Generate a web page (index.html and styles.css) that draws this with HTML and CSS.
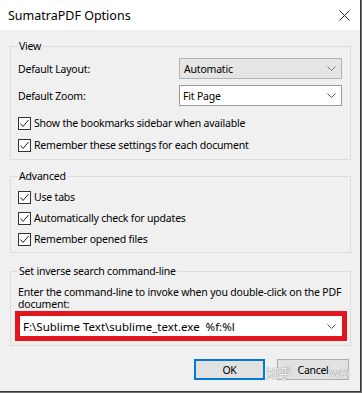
FILE: index.html
```html
<!DOCTYPE html>
<html lang="en">
<head>
    <meta charset="UTF-8">
    <title>SumatraPDF Options</title>
    <link rel="stylesheet" href="styles.css">
</head>
<body>
    <div class="window">
        <div class="titlebar">
            <span class="title">SumatraPDF Options</span>
            <svg class="close" width="11" height="11" viewBox="0 0 11 11">
                <path d="M0.5 0.5 L10.5 10.5 M10.5 0.5 L0.5 10.5" stroke="#222" stroke-width="1" fill="none"/>
            </svg>
        </div>

        <div class="content">
            <fieldset class="group group-view">
                <legend>View</legend>
                <div class="row">
                    <label>Default Layout:</label>
                    <div class="combo combo-disabled">
                        <span>Automatic</span>
                        <svg class="chevron" width="9" height="5" viewBox="0 0 9 5"><polyline points="0.5,0.5 4.5,4.5 8.5,0.5" stroke="#777" fill="none"/></svg>
                    </div>
                </div>
                <div class="row row-second">
                    <label>Default Zoom:</label>
                    <div class="combo">
                        <span>Fit Page</span>
                        <svg class="chevron" width="9" height="5" viewBox="0 0 9 5"><polyline points="0.5,0.5 4.5,4.5 8.5,0.5" stroke="#555" fill="none"/></svg>
                    </div>
                </div>
                <div class="checks checks-view">
                    <div class="check">
                        <span class="box"><svg width="11" height="11" viewBox="0 0 11 11"><polyline points="1.5,5.5 4,8.5 9.5,2" stroke="#222" fill="none"/></svg></span>
                        Show the bookmarks sidebar when available
                    </div>
                    <div class="check">
                        <span class="box"><svg width="11" height="11" viewBox="0 0 11 11"><polyline points="1.5,5.5 4,8.5 9.5,2" stroke="#222" fill="none"/></svg></span>
                        Remember these settings for each document
                    </div>
                </div>
            </fieldset>

            <fieldset class="group group-advanced">
                <legend>Advanced</legend>
                <div class="checks checks-advanced">
                    <div class="check">
                        <span class="box"><svg width="11" height="11" viewBox="0 0 11 11"><polyline points="1.5,5.5 4,8.5 9.5,2" stroke="#222" fill="none"/></svg></span>
                        Use tabs
                    </div>
                    <div class="check">
                        <span class="box"><svg width="11" height="11" viewBox="0 0 11 11"><polyline points="1.5,5.5 4,8.5 9.5,2" stroke="#222" fill="none"/></svg></span>
                        Automatically check for updates
                    </div>
                    <div class="check">
                        <span class="box"><svg width="11" height="11" viewBox="0 0 11 11"><polyline points="1.5,5.5 4,8.5 9.5,2" stroke="#222" fill="none"/></svg></span>
                        Remember opened files
                    </div>
                </div>
            </fieldset>

            <fieldset class="group group-inverse">
                <legend>Set inverse search command-line</legend>
                <p class="hint">Enter the command-line to invoke when you double-click on the PDF document:</p>
                <div class="highlight">
                    <div class="combo combo-wide">
                        <span>F:\Sublime Text\sublime_text.exe&nbsp; %f:%l</span>
                        <svg class="chevron" width="9" height="5" viewBox="0 0 9 5"><polyline points="0.5,0.5 4.5,4.5 8.5,0.5" stroke="#555" fill="none"/></svg>
                    </div>
                </div>
            </fieldset>

            <div class="buttons">
                <button class="btn btn-default">OK</button>
                <button class="btn">Cancel</button>
            </div>
        </div>

        <!-- watermark of the source site, split around the Cancel label -->
        <div class="watermark"><span>知乎</span><span>wei</span></div>
    </div>
</body>
</html>
```

FILE: styles.css
```css
body {
    margin: 0;
    background: #6e6e6e;
    font-family: "Noto Sans", "Noto Sans CJK SC", sans-serif;
    font-size: 10.5px;
    letter-spacing: -0.2px;
    color: #000;
}
.window {
    position: relative;
    width: 360px;
    height: 391px;
    background: #f0f0f0;
    border-right: 1px solid #3a3a3a;
    border-bottom: 1px solid #3a3a3a;
    overflow: hidden;
}
.titlebar {
    height: 30px;
    background: #fff;
    display: flex;
    align-items: center;
    justify-content: space-between;
    padding: 0 10px 0 8px;
}
.title {
    font-size: 12.5px;
    letter-spacing: 0;
}
.close {
    display: block;
}
.content {
    padding: 8px 9px 0 10px;
}
.group {
    margin: 0;
    border: 1px solid #dcdcdc;
    padding: 0 8px 5px 7px;
    min-width: 0;
}
.group legend {
    padding: 0 1px;
    line-height: 16px;
}
.group-view {
    padding-bottom: 6px;
}
.group-advanced {
    margin-top: 8px;
    padding-bottom: 5px;
}
.group-inverse {
    margin-top: 10px;
    padding-bottom: 4px;
}
.row {
    display: flex;
    align-items: center;
    justify-content: space-between;
    height: 21px;
    margin-top: 4px;
}
.row-second {
    margin-top: 6px;
}
.combo {
    box-sizing: border-box;
    width: 163px;
    height: 21px;
    display: flex;
    align-items: center;
    justify-content: space-between;
    padding: 0 5px 0 3px;
    background: #fff;
    border: 1px solid #9a9a9a;
}
.combo-disabled {
    background: #e5e5e5;
    border-color: #b4b4b4;
    padding-left: 4px;
}
.chevron {
    display: block;
}
.checks {
    display: flex;
    flex-direction: column;
    gap: 6px;
}
.checks-view {
    margin-top: 9px;
}
.checks-advanced {
    margin-top: 5px;
    gap: 5px;
}
.check {
    display: flex;
    align-items: center;
    height: 16px;
    white-space: nowrap;
}
.box {
    box-sizing: border-box;
    width: 13px;
    height: 13px;
    border: 1px solid #333;
    background: #fff;
    margin-right: 3px;
    display: flex;
}
.hint {
    margin: 7px 0 0;
    line-height: 12px;
}
.highlight {
    margin: 1px -5px 0 -3px;
    border: 5px solid #e1161f;
}
.combo-wide {
    width: 100%;
    height: 20px;
    padding-left: 2px;
    border-color: #fff;
    font-size: 11.5px;
    letter-spacing: 0;
}
.buttons {
    display: flex;
    justify-content: flex-end;
    gap: 12px;
    margin-top: 13px;
    padding-right: 2px;
}
.btn {
    box-sizing: border-box;
    width: 72px;
    height: 21px;
    background: #e1e1e1;
    border: 1px solid #adadad;
    font-family: inherit;
    font-size: 10.5px;
    letter-spacing: -0.3px;
    color: #000;
    padding: 0;
}
.btn-default {
    width: 71px;
    border: 2px solid #0078d7;
}
.watermark {
    position: absolute;
    left: 266px;
    top: 363px;
    width: 84px;
    display: flex;
    justify-content: space-between;
    font-size: 13px;
    color: rgba(255, 255, 255, 0.9);
    text-shadow: 0 0 1px #8a8a8a, 0 0 1px #8a8a8a;
    white-space: nowrap;
    pointer-events: none;
}
```
